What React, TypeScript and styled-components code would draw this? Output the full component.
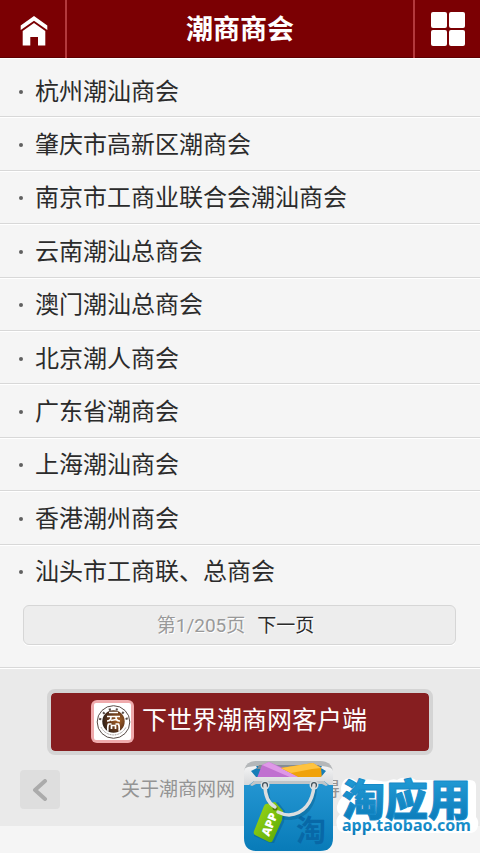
import React from "react";
import styled, { createGlobalStyle } from "styled-components";

const GlobalStyle = createGlobalStyle`
  * { box-sizing: border-box; }
  body {
    margin: 0;
    background: #f5f5f5;
    color: #2b2b2b;
    font-family: Roboto, "Noto Sans CJK SC", sans-serif;
  }
  a { color: inherit; text-decoration: none; }
  button { border: 0; padding: 0; font: inherit; cursor: pointer; }
`;

const Page = styled.div`
  position: relative;
  min-height: 100vh;
  overflow: hidden;
`;

const Header = styled.header`
  display: grid;
  grid-template-columns: 67px 1fr 67px;
  height: 58px;
  background: #7b0003;
  box-shadow: inset 0 -1px #5e0002, 0 1px #ffffff;
`;

const HomeLink = styled.a`
  display: flex;
  align-items: center;
  justify-content: center;
  padding: 4px 0 0 2px;
  border-right: 2px solid #b3393c;
`;

const MenuButton = styled.button`
  display: flex;
  align-items: center;
  justify-content: center;
  background: transparent;
  border-left: 2px solid #b3393c;
`;

const Title = styled.h1`
  margin: 0;
  padding-top: 2px;
  color: #fff;
  font-size: 27px;
  line-height: 56px;
  font-weight: 700;
  text-align: center;
`;

const List = styled.ul`
  display: grid;
  grid-auto-rows: 1fr;
  min-height: 540px;
  margin: 0;
  padding: 6px 0 0;
  list-style: none;
`;

const Item = styled.li`
  display: flex;
  border-bottom: 1px solid #d8d8d8;
  box-shadow: 0 1px #fff;
  &:last-child { border-bottom-color: transparent; box-shadow: none; }
`;

const ItemLink = styled.a`
  display: flex;
  flex: 1;
  align-items: center;
  padding: 3px 0 0 19px;
  font-size: 24px;
  line-height: 36px;
  &::before {
    content: "";
    width: 4px;
    height: 4px;
    margin-right: 12px;
    border-radius: 2px;
    background: #606060;
  }
`;

const Pager = styled.nav`
  display: flex;
  align-items: center;
  justify-content: center;
  gap: 12px;
  height: 40px;
  margin: 7px 24px 22px 23px;
  padding: 0 8px 4px 0;
  border: 1px solid #d6d6d6;
  border-radius: 6px;
  background: #ededed;
  box-shadow: 0 1px #fff;
  font-size: 19px;
  text-shadow: 1px 1px #fff;
`;

const PageCount = styled.span`
  color: #999;
`;

const Footer = styled.footer`
  padding: 21px 0 17px;
  border-top: 1px solid #d8d8d8;
  background: #eaeaea;
  box-shadow: inset 0 1px #fff;
`;

const ClientLink = styled.a`
  display: flex;
  align-items: center;
  gap: 8px;
  height: 66px;
  margin: 0 47px;
  padding: 0 0 2px 40px;
  border: 4px solid #d4d4d4;
  border-radius: 8px;
  background: #861e20 padding-box;
  color: #fff;
  font-size: 25px;
  line-height: 36px;
`;

const FooterNav = styled.nav`
  display: flex;
  align-items: center;
  gap: 61px;
  margin-top: 15px;
  padding: 0 20px;
  color: #949494;
  font-size: 19px;
`;

const BackButton = styled.button`
  display: grid;
  place-items: center;
  width: 40px;
  height: 39px;
  border-radius: 4px;
  background: #dedede;
`;

const FooterLinks = styled.div`
  display: flex;
  gap: 86px;
  padding-bottom: 4px;
`;

const Watermark = styled.a`
  position: absolute;
  right: 0;
  top: 752px;
  display: flex;
`;

const chambers = [
  "杭州潮汕商会",
  "肇庆市高新区潮商会",
  "南京市工商业联合会潮汕商会",
  "云南潮汕总商会",
  "澳门潮汕总商会",
  "北京潮人商会",
  "广东省潮商会",
  "上海潮汕商会",
  "香港潮州商会",
  "汕头市工商联、总商会",
];

function HomeIcon() {
  return (
    <svg width="28" height="30" viewBox="0 0 28 30" fill="#fff" aria-hidden="true">
      <path d="M14 0 27.3 9.5V14L14 4.7.7 14V9.5z" />
      <path d="M14 7 25.3 15V29.5H18V21H10.3V29.5H2.7V15z" />
    </svg>
  );
}

function GridIcon() {
  return (
    <svg width="34" height="34" viewBox="0 0 34 34" fill="#fff" aria-hidden="true">
      <rect width="16" height="16" rx="2" />
      <rect x="18" width="16" height="16" rx="2" />
      <rect y="18" width="16" height="16" rx="2" />
      <rect x="18" y="18" width="16" height="16" rx="2" />
    </svg>
  );
}

function SealLogo() {
  return (
    <svg width="43" height="43" viewBox="0 0 43 43" aria-hidden="true">
      <defs>
        <radialGradient id="seal" cx=".7" cy=".45" r=".7">
          <stop offset="0" stopColor="#a96428" />
          <stop offset=".55" stopColor="#66391c" />
          <stop offset="1" stopColor="#302018" />
        </radialGradient>
      </defs>
      <rect width="43" height="43" rx="6" fill="#efaaac" />
      <rect x="3" y="3" width="37" height="37" rx="2" fill="#fff" />
      <circle cx="22.5" cy="22" r="16.3" fill="none" stroke="#574b46" strokeWidth="1" />
      <path d="M9 20a13.8 13.8 0 0 1 27 0" fill="none" stroke="#554b46" strokeWidth="2.2" strokeDasharray="2 5" />
      <path d="M10 27a13.8 13.8 0 0 0 25 0" fill="none" stroke="#8c8480" strokeWidth="1" strokeDasharray="1 .7" />
      <circle cx="22.5" cy="21.5" r="11.2" fill="url(#seal)" />
      <g fill="none" stroke="#fff" strokeWidth="1.7" strokeLinejoin="round">
        <path d="M18 12.5h9M16 16.5h13M20 17c0 3-2 4-4 4M25 17c0 3 2 4 4 4M20 20.5l5-1" />
        <path d="M17.5 31c-1 0-1-5 0-7h3M27.5 31c1 0 1-5 0-7h-3M20.5 29v-3.5h4V29" />
      </g>
    </svg>
  );
}

function BagArt() {
  return (
    <svg width="244" height="101" viewBox="236 752 244 101" role="img" aria-label="淘应用 app.taobao.com">
      <defs>
        <linearGradient id="bag" x2="0" y2="1">
          <stop stopColor="#2799d5" />
          <stop offset="1" stopColor="#087bb8" />
        </linearGradient>
        <linearGradient id="rim" x2="0" y2="1">
          <stop stopColor="#f4f4f5" />
          <stop offset="1" stopColor="#d6d8da" />
        </linearGradient>
        <linearGradient id="brand" x2="0" y2="1">
          <stop stopColor="#28a3dc" />
          <stop offset="1" stopColor="#0877b6" />
        </linearGradient>
        <linearGradient id="tag" x2="1" y2="1">
          <stop stopColor="#a1db18" />
          <stop offset="1" stopColor="#55a506" />
        </linearGradient>
      </defs>

      <path d="M244 774h89v64q0 13-13 13h-63q-13 0-13-13z" fill="url(#bag)" />
      <path d="M256 761h64q11 0 13 10v8h-89v-8q2-10 12-10z" fill="#b4b7b9" />
      <path d="M249 769l8-3h64l8 3-4 12h-72z" fill="#167db7" />
      <path d="M259 765h60l3 4H257z" fill="#858d93" />
      <path d="M257 778 262 765 269 762 298 774 303 780H257z" fill="#c070d0" />
      <path d="M262 765 269 762 303 779 292 778z" fill="#de98e7" />
      <path d="M281 768 313 763 321 768 322 779H302z" fill="#f0a20b" />
      <path d="M281 768 313 763 321 768 312 769 291 773z" fill="#ffc33f" />
      <path d="M244 771q0-3 4-4l8-1 1 2-6 3 5 6h65l5-6-5-3 1-2q11 1 11 5v14h-4l-5-4H254l-5 4h-5z" fill="url(#rim)" />
      <path d="M250 785l4-4h70l4 4-2 1-4-2h-66l-4 2z" fill="#c1c5c8" />

      <text x="296" y="841" fill="#0868a7" fontFamily="Noto Sans CJK SC" fontSize="30" fontWeight="700">淘</text>

      <path d="M266 787c1 23 12 30 24 29 14-1 23-12 24-29" transform="translate(1 2)" fill="none" stroke="#075b88" strokeWidth="4" opacity=".4" />
      <circle cx="265" cy="785" r="4.5" fill="#d9dfe2" />
      <circle cx="265" cy="785" r="3" fill="#41505a" />
      <circle cx="314" cy="785" r="4.5" fill="#d9dfe2" />
      <circle cx="314" cy="785" r="3" fill="#41505a" />
      <path d="M270 805 278 802 285 811 284 822 274 843 270 843 254 836 255 829 266 805z" fill="#064f7b" opacity=".35" />
      <path d="M266 804 275 802 283 811 282 820 273 840q-1 3-4 2l-14-7q-2-1-1-4l10-25q1-2 2-2z" fill="url(#tag)" />
      <circle cx="275" cy="808" r="2.5" fill="#56750c" />
      <path d="M265 785c0 10 3 18 10 22M278 812c4 2 8 3 11 3 14-1 24-12 25-30" fill="none" stroke="#dcdedf" strokeWidth="3.5" strokeLinecap="round" />
      <text transform="translate(269 837) rotate(-68)" fill="#fff" fontFamily="Open Sans" fontSize="12" fontWeight="800">APP</text>

      <path d="M346 779q6-2 10 2 12-3 25 0 4 1 7 0 5-3 9-1 4-3 9-2 6-1 10 2h54q6 0 6 6v31q3 3 2 9-1 6-7 7H347q-9 0-10-7-2-7 3-12-4-3-3-8 1-5 5-9-1-5-1-9 1-7 5-9z" fill="#fff" />
      <g fill="url(#brand)">
        <text x="342" y="816" fontFamily="Noto Sans CJK SC" fontSize="43" fontWeight="900" stroke="#168bc9" strokeWidth="1" strokeLinejoin="round">淘应用</text>
        <text x="342" y="831" fontFamily="Noto Sans" fontSize="16" fontWeight="700">app.taobao.com</text>
      </g>
    </svg>
  );
}

export default function App() {
  return (
    <Page>
      <GlobalStyle />
      <Header>
        <HomeLink href="#home" aria-label="首页"><HomeIcon /></HomeLink>
        <Title>潮商商会</Title>
        <MenuButton type="button" aria-label="菜单"><GridIcon /></MenuButton>
      </Header>
      <main>
        <List>
          {chambers.map((name) => (
            <Item key={name}><ItemLink href="#chamber">{name}</ItemLink></Item>
          ))}
        </List>
        <Pager>
          <PageCount>第1/205页</PageCount>
          <a href="#next">下一页</a>
        </Pager>
      </main>
      <Footer>
        <ClientLink href="#client">
          <SealLogo />
          <span>下世界潮商网客户端</span>
        </ClientLink>
        <FooterNav>
          <BackButton type="button" aria-label="返回">
            <svg width="16" height="22" viewBox="0 0 16 22" fill="none" stroke="#ababab" strokeWidth="4" strokeLinecap="round" strokeLinejoin="round" aria-hidden="true">
              <path d="M13 2 3 11l10 9" />
            </svg>
          </BackButton>
          <FooterLinks>
            <a href="#about">关于潮商网网</a>
            <a href="#get">得</a>
          </FooterLinks>
        </FooterNav>
      </Footer>
      <Watermark href="#taobao"><BagArt /></Watermark>
    </Page>
  );
}
